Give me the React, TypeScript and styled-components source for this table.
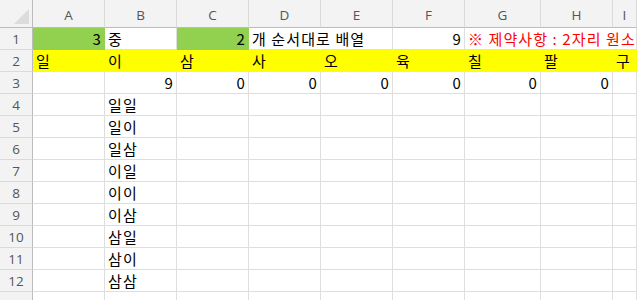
import { Fragment } from "react";
import styled, { createGlobalStyle } from "styled-components";

const GlobalStyle = createGlobalStyle`
  html, body {
    margin: 0;
    padding: 0;
    background: #ffffff;
    overflow: hidden;
  }
`;

const GREEN = "#92d050";
const YELLOW = "#ffff00";
const GRID = "#dedede";
const HEAD_LINE = "#bcbcbc";

const COLUMNS = ["A", "B", "C", "D", "E", "F", "G", "H", "I"];
const WIDTHS = [72, 72, 72, 72, 72, 72, 76, 72];

const Sheet = styled.div`
  display: grid;
  grid-template-columns: 33px ${WIDTHS.map((w) => `${w}px`).join(" ")} 1fr;
  grid-auto-rows: 22px;
  grid-template-rows: 28px;
  width: 637px;
  height: 300px;
  overflow: hidden;
  font-family: "Noto Sans CJK KR", "Noto Sans", sans-serif;
`;

const Corner = styled.div`
  position: relative;
  background: #f3f3f3;
  border-right: 1px solid ${HEAD_LINE};
  border-bottom: 1px solid ${HEAD_LINE};
  box-sizing: border-box;

  &::after {
    content: "";
    position: absolute;
    right: 3px;
    bottom: 3px;
    border-style: solid;
    border-width: 0 0 15px 15px;
    border-color: transparent transparent #dcdcdc transparent;
  }
`;

const ColHead = styled.div`
  display: flex;
  align-items: center;
  justify-content: center;
  background: #f3f3f3;
  border-right: 1px solid #dadada;
  border-bottom: 1px solid ${HEAD_LINE};
  box-sizing: border-box;
  padding-top: 2px;
  font-family: "Open Sans", "Noto Sans", sans-serif;
  font-size: 13.5px;
  color: #555555;
`;

const RowHead = styled.div`
  display: flex;
  align-items: center;
  justify-content: center;
  background: #f3f3f3;
  border-right: 1px solid ${HEAD_LINE};
  border-bottom: 1px solid #dadada;
  box-sizing: border-box;
  font-family: "Open Sans", "Noto Sans", sans-serif;
  font-size: 13.5px;
  color: #555555;
`;

type CellProps = {
  $fill?: string;
  $align?: "left" | "right";
  $color?: string;
  $open?: boolean;
};

const Cell = styled.div<CellProps>`
  display: flex;
  align-items: center;
  justify-content: ${(p) => (p.$align === "right" ? "flex-end" : "flex-start")};
  box-sizing: border-box;
  padding: 0 2px 0 3px;
  background: ${(p) => p.$fill ?? "transparent"};
  border-right: 1px solid
    ${(p) => (p.$open ? "transparent" : p.$fill ?? GRID)};
  border-bottom: 1px solid ${(p) => p.$fill ?? GRID};
  white-space: nowrap;
  overflow: visible;
  font-size: 15px;
  letter-spacing: 1.1px;
  line-height: 21px;
  color: ${(p) => p.$color ?? "#000000"};
`;

type CellSpec = {
  v?: string;
  align?: "left" | "right";
  fill?: string;
  color?: string;
  open?: boolean;
};

const row1: CellSpec[] = [
  { v: "3", align: "right", fill: GREEN },
  { v: "중" },
  { v: "2", align: "right", fill: GREEN },
  { v: "개 순서대로 배열", open: true },
  {},
  { v: "9", align: "right" },
  { v: "※ 제약사항 : 2자리 원소", color: "#ff0000", open: true },
  { open: true },
  {},
];

const labels = ["일", "이", "삼", "사", "오", "육", "칠", "팔", "구"];
const row2: CellSpec[] = labels.map((v) => ({ v, fill: YELLOW }));

const row3: CellSpec[] = [
  {},
  { v: "9", align: "right" },
  ...Array.from({ length: 6 }, () => ({ v: "0", align: "right" as const })),
  {},
];

const pairs = ["일일", "일이", "일삼", "이일", "이이", "이삼", "삼일", "삼이", "삼삼"];
const listRows: CellSpec[][] = pairs.map((p) =>
  COLUMNS.map((_, i) => (i === 1 ? { v: p } : {}))
);

const rows: CellSpec[][] = [row1, row2, row3, ...listRows, COLUMNS.map(() => ({}))];

const App = () => {
  return (
    <>
      <GlobalStyle />
      <Sheet>
        <Corner />
        {COLUMNS.map((c) => (
          <ColHead key={c}>{c}</ColHead>
        ))}
        {rows.map((cells, r) => (
          <Fragment key={r}>
            {/* the last row only peeks in at the bottom edge, its number is below */}
            <RowHead>{r < 12 ? r + 1 : ""}</RowHead>
            {cells.map((c, i) => (
              <Cell
                key={i}
                $fill={c.fill}
                $align={c.align}
                $color={c.color}
                $open={c.open}
              >
                {c.v}
              </Cell>
            ))}
          </Fragment>
        ))}
      </Sheet>
    </>
  );
};

export default App;
